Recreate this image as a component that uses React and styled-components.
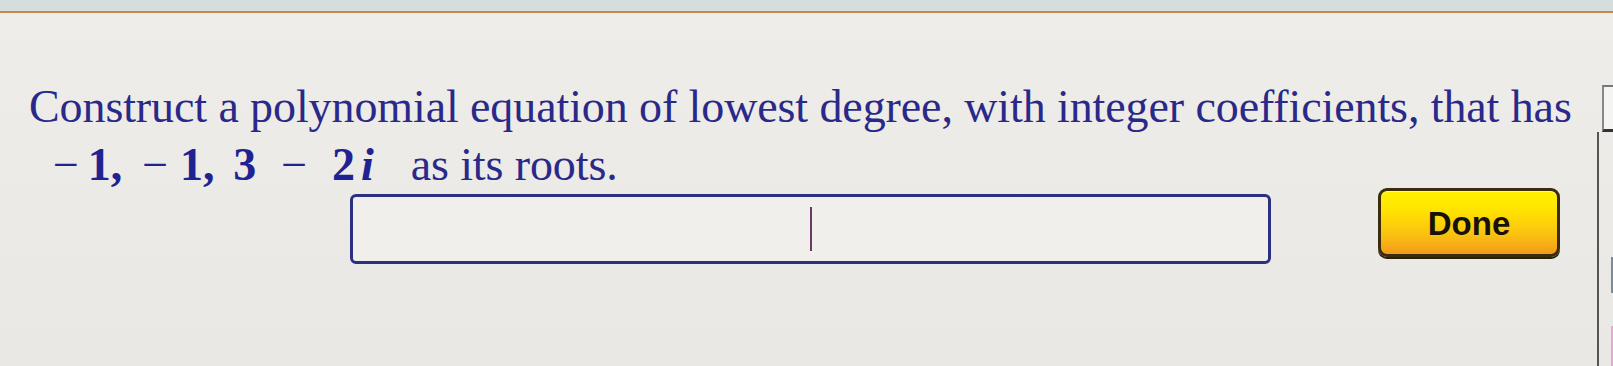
import React from "react";
import styled, { createGlobalStyle } from "styled-components";

const Global = createGlobalStyle`
  html, body { margin: 0; padding: 0; }
  body { background: #ebeae6; overflow: hidden; }
`;

const Page = styled.div`
  width: 1613px;
  height: 366px;
  display: flex;
  flex-direction: column;
  overflow: hidden;
  background: linear-gradient(180deg, #eeede9 0%, #e9e8e4 100%);
`;

const TopBar = styled.div`
  height: 11px;
  flex: none;
  background: #d4dfdd;
  border-bottom: 2px solid #c48a45;
`;

const Body = styled.div`
  flex: 1;
  display: flex;
  min-height: 0;
`;

const Content = styled.div`
  flex: 1;
  padding: 65px 0 0 29px;
  display: flex;
  flex-direction: column;
`;

const Question = styled.p`
  margin: 0;
  font-family: "Liberation Serif", "Times New Roman", serif;
  font-size: 46px;
  letter-spacing: -0.1px;
  line-height: 58px;
  color: #2a2989;
  white-space: nowrap;
`;

const MathLine = styled.span`
  display: inline-flex;
  align-items: baseline;
  margin-left: 24px;
`;

const Sym = styled.span`
  font-weight: ${(p) => (p.$light ? 400 : 700)};
  font-style: ${(p) => (p.$italic ? "italic" : "normal")};
  color: #1f2392;
  margin-left: ${(p) => p.$gap || 0}px;
`;

const Plain = styled.span`
  margin-left: ${(p) => p.$gap || 0}px;
`;

const AnswerRow = styled.div`
  display: flex;
  align-items: flex-start;
  margin-top: -6px;
`;

const AnswerBox = styled.div`
  margin-left: 321px;
  margin-top: 6px;
  width: 921px;
  height: 70px;
  box-sizing: border-box;
  border: 3px solid #2c3080;
  border-radius: 6px;
  background: #f0efeb;
  display: flex;
  align-items: center;
  justify-content: center;
`;

const Caret = styled.span`
  width: 2px;
  height: 44px;
  background: #6b3a63;
`;

const DoneButton = styled.button`
  margin-left: 107px;
  width: 182px;
  height: 69px;
  box-sizing: border-box;
  border: 3px solid #3a2c0c;
  border-radius: 9px;
  background: linear-gradient(180deg, #fff200 0%, #ffe400 30%, #fac012 70%, #f49a1a 100%);
  box-shadow: 0 2px 0 #2a2208, inset 0 1px 0 rgba(255, 255, 255, 0.5);
  font-family: "Liberation Sans", Arial, sans-serif;
  font-weight: 700;
  font-size: 33px;
  color: #17110a;
  padding: 2px 0 0;
  cursor: pointer;
`;

const SideColumn = styled.div`
  width: 16px;
  flex: none;
  display: flex;
  flex-direction: column;
  padding-top: 72px;
`;

const SideBox = styled.div`
  height: 48px;
  margin-left: 5px;
  border-top: 2px solid #777;
  border-left: 2px solid #888;
  border-bottom: 3px solid #333;
  background: #f4f4f2;
`;

const Rail = styled.div`
  flex: 1;
  border-left: 2px solid #555;
  display: flex;
  flex-direction: column;
  padding-top: 125px;
  gap: 33px;
`;

const Tab = styled.div`
  margin-left: 12px;
  height: ${(p) => p.$h}px;
  background: ${(p) => p.$c};
`;

export default function App() {
  return (
    <>
      <Global />
      <Page>
        <TopBar />
        <Body>
          <Content>
            <Question>
              Construct a polynomial equation of lowest degree, with integer coefficients, that has
              <br />
              <MathLine>
                <Sym $light>−</Sym>
                <Sym $gap={9}>1,</Sym>
                <Sym $light $gap={20}>−</Sym>
                <Sym $gap={12}>1,</Sym>
                <Sym $gap={19}>3</Sym>
                <Sym $light $gap={25}>−</Sym>
                <Sym $gap={25}>2</Sym>
                <Sym $italic $gap={6}>i</Sym>
                <Plain $gap={37}>as its roots.</Plain>
              </MathLine>
            </Question>
            <AnswerRow>
              <AnswerBox>
                <Caret />
              </AnswerBox>
              <DoneButton>Done</DoneButton>
            </AnswerRow>
          </Content>
          <SideColumn>
            <SideBox />
            <Rail>
              <Tab $h={36} $c="#7d8a9a" />
              <Tab $h={40} $c="#e6a7d0" />
            </Rail>
          </SideColumn>
        </Body>
      </Page>
    </>
  );
}
